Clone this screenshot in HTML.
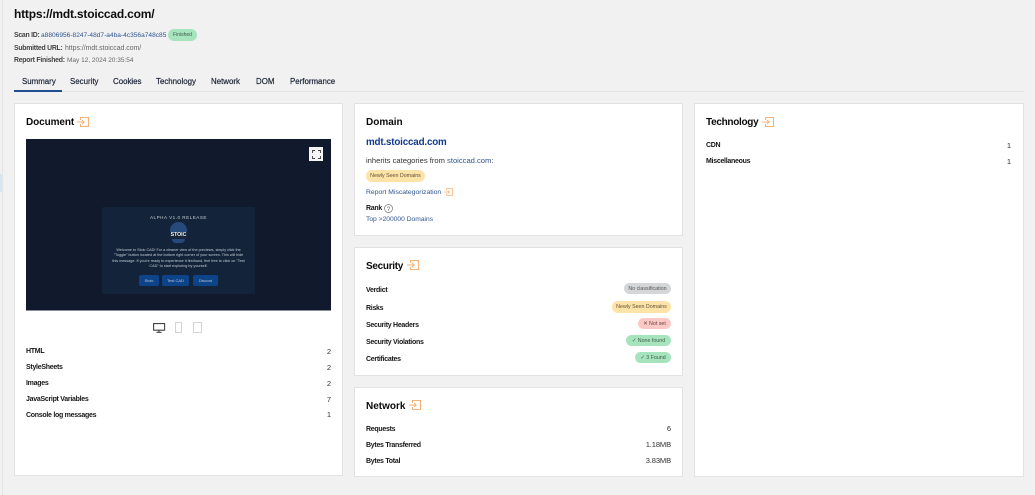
<!DOCTYPE html>
<html><head><meta charset="utf-8">
<style>
html,body{margin:0;padding:0}
body{width:1035px;height:495px;overflow:hidden;position:relative;background:#f1f1f1;font-family:"Liberation Sans",sans-serif;color:#111}
.t{position:absolute;white-space:nowrap;line-height:12px}
.card{position:absolute;background:#fff;border:1px solid #e2e2e2;box-sizing:border-box}
.h{font-size:10px;font-weight:bold;color:#0b0b0b}
.l{font-size:7px;font-weight:bold;color:#161616;letter-spacing:-.28px}
.v{font-size:7.6px;color:#333;text-align:right;letter-spacing:-.15px}
.m{font-size:6.9px;color:#666}
.b{font-size:6.9px;font-weight:bold;color:#444;letter-spacing:-.25px}
.a{color:#30558f}
.tab{font-size:7.9px;color:#1c2436;top:76px;-webkit-text-stroke:.2px #1c2436}
.p{position:absolute;border-radius:7px;height:11px;line-height:13px;font-size:5.3px;text-align:center;color:#555;white-space:nowrap}
svg{position:absolute;overflow:visible}
.i{fill:none;stroke:#f6b178;stroke-width:1}
.dv{position:absolute;border:1px solid #d4d4d4;box-sizing:border-box}
</style></head><body>
<div style="position:absolute;left:2px;top:0;width:1px;height:495px;background:#e4e4e4"></div>
<div style="position:absolute;left:0;top:174px;width:2px;height:18px;background:#d5e6f3"></div>

<div class="t" style="left:14px;top:7px;font-size:12px;letter-spacing:-.2px;font-weight:bold;color:#0e0e0e;line-height:14px">https://mdt.stoiccad.com/</div>
<div class="t b" style="left:14px;top:30px">Scan ID:</div>
<div class="t m a" style="left:41px;top:30px;font-size:6.6px">a8806956-8247-48d7-a4ba-4c356a748c85</div>
<div class="p" style="left:168px;top:29px;width:29px;height:12px;line-height:13px;background:#a6e4bd;color:#3c5a48;font-size:5px">Finished</div>
<div class="t b" style="left:14px;top:43px">Submitted URL:</div>
<div class="t m" style="left:65px;top:43px">https://mdt.stoiccad.com/</div>
<div class="t b" style="left:14px;top:55px">Report Finished:</div>
<div class="t m" style="left:67px;top:55px;font-size:6.5px">May 12, 2024 20:35:54</div>

<div class="t tab" style="left:22px">Summary</div>
<div class="t tab" style="left:70px">Security</div>
<div class="t tab" style="left:113px">Cookies</div>
<div class="t tab" style="left:156px">Technology</div>
<div class="t tab" style="left:211px">Network</div>
<div class="t tab" style="left:256px">DOM</div>
<div class="t tab" style="left:290px">Performance</div>
<div style="position:absolute;left:14px;top:91px;width:1010px;height:1px;background:#e4e4e4"></div>
<div style="position:absolute;left:14px;top:90px;width:48px;height:2px;background:#1f4e93"></div>

<!-- Document -->
<div class="card" style="left:14px;top:103px;width:329px;height:373px"></div>
<div class="t h" style="left:26px;top:117px;letter-spacing:-.1px">Document</div>
<svg style="left:77px;top:117px" width="12" height="10" viewBox="0 0 12 10"><path class="i" d="M3.5 3V.5h8v9h-8V7M0 5h7M5 3l2.2 2L5 7"/></svg>

<div style="position:absolute;left:26px;top:139px;width:305px;height:172px;background:#101a2c;border-bottom:1px solid #8a8f96;box-sizing:border-box"></div>
<div style="position:absolute;left:309px;top:147px;width:14px;height:14px;background:#f4f4f4"></div>
<svg style="left:312px;top:150px" width="9" height="9" viewBox="0 0 9 9"><path d="M0.5 3V.5H3M6 .5h2.5V3M8.5 6v2.5H6M3 8.5H.5V6" fill="none" stroke="#444" stroke-width=".9"/></svg>

<div style="position:absolute;left:102px;top:207px;width:153px;height:87px;background:#13243a;border-radius:2px"></div>
<div class="t" style="left:102px;width:153px;text-align:center;top:214px;font-size:4.6px;letter-spacing:.5px;color:#c6ccd4;line-height:8px">ALPHA V1.0 RELEASE</div>
<div style="position:absolute;left:170px;top:222px;width:17px;height:17px;border-radius:50%;background:#274a7c"></div>
<div style="position:absolute;left:169px;top:232px;width:19px;height:7px;background:#18263a;border-radius:1px"></div>
<div class="t" style="left:169px;width:19px;text-align:center;top:232px;font-size:5.2px;font-weight:bold;color:#eef2f6;line-height:7px">STOIC</div>
<div style="position:absolute;left:172px;top:239px;width:13px;height:4px;border-radius:0 0 7px 7px;background:#274a7c"></div>
<div class="t" style="left:103px;width:151px;top:248px;font-size:3.75px;line-height:5.4px;color:#c3cad2;text-align:center">Welcome to Stoic CAD! For a cleaner view of the previews, simply click the<br>"Toggle" button located at the bottom right corner of your screen. This will hide<br>this message. If you're ready to experience it firsthand, feel free to click on "Test<br>CAD" to start exploring by yourself.</div>
<div class="p" style="left:139px;top:275px;width:20px;height:11px;line-height:11px;border-radius:2px;background:#0c4389;color:#b8c8dc;font-size:4px">Stoic</div>
<div class="p" style="left:162px;top:275px;width:27px;height:11px;line-height:11px;border-radius:2px;background:#0c4389;color:#b8c8dc;font-size:4px">Test CAD</div>
<div class="p" style="left:193px;top:275px;width:25px;height:11px;line-height:11px;border-radius:2px;background:#0c4389;color:#b8c8dc;font-size:4px">Discord</div>

<svg style="left:153px;top:323px" width="13" height="10" viewBox="0 0 13 10"><path d="M.6.6h11v6.6H.6zM3.5 9.3h5M6 7v2" fill="none" stroke="#444" stroke-width="1.1"/></svg>
<div class="dv" style="left:175px;top:322px;width:7px;height:11px"></div>
<div class="dv" style="left:193px;top:322px;width:9px;height:11px"></div>

<div class="t l" style="left:26px;top:346px">HTML</div><div class="t v" style="right:704px;top:346px">2</div>
<div class="t l" style="left:26px;top:362px">StyleSheets</div><div class="t v" style="right:704px;top:362px">2</div>
<div class="t l" style="left:26px;top:378px">Images</div><div class="t v" style="right:704px;top:378px">2</div>
<div class="t l" style="left:26px;top:394px">JavaScript Variables</div><div class="t v" style="right:704px;top:394px">7</div>
<div class="t l" style="left:26px;top:410px">Console log messages</div><div class="t v" style="right:704px;top:409px">1</div>

<!-- Domain -->
<div class="card" style="left:354px;top:103px;width:329px;height:133px"></div>
<div class="t h" style="left:366px;top:117px">Domain</div>
<div class="t" style="left:366px;top:137px;font-size:9.8px;letter-spacing:-.17px;font-weight:bold;color:#123a8c">mdt.stoiccad.com</div>
<div class="t" style="left:366px;top:155px;font-size:7.6px;color:#333">inherits categories from <span class="a">stoiccad.com</span>:</div>
<div class="p" style="left:366px;top:170px;width:59px;height:12px;line-height:13px;background:#fde3a7;color:#5d5235">Newly Seen Domains</div>
<div class="t a" style="left:366px;top:187px;font-size:6.8px">Report Miscategorization</div>
<svg style="left:444px;top:188px" width="9" height="8" viewBox="0 0 12 10"><path class="i" d="M3.5 3V.5h8v9h-8V7M0 5h7M5 3l2.2 2L5 7"/></svg>
<div class="t l" style="left:366px;top:203px">Rank</div>
<svg style="left:384px;top:204px" width="9" height="9" viewBox="0 0 9 9"><circle cx="4.5" cy="4.5" r="4" fill="none" stroke="#777" stroke-width=".7"/><text x="4.5" y="6.8" font-size="6.5" text-anchor="middle" fill="#666" font-family="Liberation Sans">?</text></svg>
<div class="t a" style="left:366px;top:214px;font-size:6.7px">Top &gt;200000 Domains</div>

<!-- Security -->
<div class="card" style="left:354px;top:247px;width:329px;height:129px"></div>
<div class="t h" style="left:366px;top:261px;letter-spacing:-.3px">Security</div>
<svg style="left:407px;top:260px" width="12" height="10" viewBox="0 0 12 10"><path class="i" d="M3.5 3V.5h8v9h-8V7M0 5h7M5 3l2.2 2L5 7"/></svg>
<div class="t l" style="left:366px;top:285px">Verdict</div>
<div class="p" style="left:624px;top:283px;width:47px;background:#d5d6d8">No classification</div>
<div class="t l" style="left:366px;top:303px">Risks</div>
<div class="p" style="left:612px;top:301px;width:59px;height:12px;background:#fde3a7;color:#5d5235">Newly Seen Domains</div>
<div class="t l" style="left:366px;top:320px">Security Headers</div>
<div class="p" style="left:638px;top:318px;width:33px;background:#fbc9c5;color:#6b3d3c">&#10005; Not set</div>
<div class="t l" style="left:366px;top:337px">Security Violations</div>
<div class="p" style="left:626px;top:335px;width:45px;background:#a6e4bd;color:#3f5c4a">&#10003; None found</div>
<div class="t l" style="left:366px;top:354px">Certificates</div>
<div class="p" style="left:635px;top:352px;width:36px;background:#a6e4bd;color:#3f5c4a">&#10003; 3 Found</div>

<!-- Network -->
<div class="card" style="left:354px;top:387px;width:329px;height:90px"></div>
<div class="t h" style="left:366px;top:401px">Network</div>
<svg style="left:409px;top:400px" width="12" height="10" viewBox="0 0 12 10"><path class="i" d="M3.5 3V.5h8v9h-8V7M0 5h7M5 3l2.2 2L5 7"/></svg>
<div class="t l" style="left:366px;top:424px">Requests</div><div class="t v" style="right:364px;top:423px">6</div>
<div class="t l" style="left:366px;top:440px">Bytes Transferred</div><div class="t v" style="right:364px;top:439px">1.18MB</div>
<div class="t l" style="left:366px;top:456px">Bytes Total</div><div class="t v" style="right:364px;top:455px">3.83MB</div>

<!-- Technology -->
<div class="card" style="left:694px;top:103px;width:330px;height:374px"></div>
<div class="t h" style="left:706px;top:117px;letter-spacing:-.3px">Technology</div>
<svg style="left:762px;top:117px" width="12" height="10" viewBox="0 0 12 10"><path class="i" d="M3.5 3V.5h8v9h-8V7M0 5h7M5 3l2.2 2L5 7"/></svg>
<div class="t l" style="left:706px;top:140px">CDN</div><div class="t v" style="right:24px;top:140px">1</div>
<div class="t l" style="left:706px;top:156px">Miscellaneous</div><div class="t v" style="right:24px;top:156px">1</div>
</body></html>
